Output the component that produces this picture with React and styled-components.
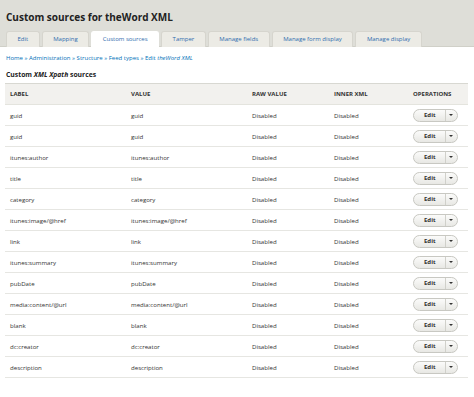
import styled, { createGlobalStyle } from 'styled-components';

const Global = createGlobalStyle`
	body {
		margin: 0;
		background: #fff;
		font-family: 'Open Sans', 'DejaVu Sans', sans-serif;
		color: #333;
	}
`;

const Header = styled.div`
	background: #deded8;
	padding: 10px 0 0 6px;
	border-bottom: 1px solid #d0d0c8;
`;

const Title = styled.h1`
	margin: 0 0 6px;
	font-size: 10px;
	line-height: 15px;
	font-weight: 700;
	color: #222;
`;

const Tabs = styled.div`
	display: flex;
	gap: 2px;
`;

const Tab = styled.a`
	display: block;
	padding: 0 ${(p) => p.$pad}px;
	height: 15px;
	line-height: 15px;
	font-size: 6px;
	white-space: nowrap;
	color: #2f6cae;
	background: ${(p) => (p.$active ? '#fff' : '#ecebe5')};
	border: 1px solid ${(p) => (p.$active ? '#fff' : '#d6d5ce')};
	border-bottom: none;
	border-radius: 3px 3px 0 0;
	margin-bottom: -1px;
`;

const Main = styled.div`
	padding: 0 6px 0 5px;
`;

const Crumbs = styled.div`
	margin: 7px 0 0 1px;
	font-size: 6px;
	line-height: 9px;
	color: #0071b8;
	em {
		font-style: italic;
	}
`;

const Caption = styled.h2`
	margin: 7px 0 3px 1px;
	font-size: 6.8px;
	line-height: 10px;
	font-weight: 700;
	color: #222;
`;

const Table = styled.table`
	width: 100%;
	table-layout: fixed;
	border-collapse: collapse;
	font-size: 6.1px;
`;

const Th = styled.th`
	text-align: left;
	font-weight: 700;
	font-size: 6px;
	text-transform: uppercase;
	background: #f2f1ee;
	color: #333;
	height: 20px;
	padding: 0 0 0 5px;
	border-top: 1px solid #d8d8d2;
	border-bottom: 1px solid #e4e4de;
	width: ${(p) => (p.$w ? `${p.$w}px` : 'auto')};
`;

const Td = styled.td`
	height: 20px;
	padding: 0 0 0 5px;
	border-bottom: 1px solid #e6e6e2;
	color: #333;
	white-space: nowrap;
`;

const DropButton = styled.div`
	display: inline-flex;
	align-items: center;
	height: 11px;
	border: 1px solid #c8c8c2;
	border-radius: 7px;
	background: linear-gradient(#fbfbfa, #e8e8e4);
	font-size: 6px;
	font-weight: 700;
	color: #333;
	overflow: hidden;
`;

const DropMain = styled.span`
	padding: 0 9px 0 10px;
	border-right: 1px solid #d0d0ca;
	line-height: 11px;
`;

const DropToggle = styled.span`
	width: 11px;
	display: flex;
	justify-content: center;
	align-items: center;
	&::after {
		content: '';
		border-left: 2px solid transparent;
		border-right: 2px solid transparent;
		border-top: 2.5px solid #333;
	}
`;

const tabs = [
	['Edit', 10.5],
	['Mapping', 10.5],
	['Custom sources', 10.5, true],
	['Tamper', 10.5],
	['Manage fields', 10.5],
	['Manage form display', 10.5],
	['Manage display', 10.5],
];

const rows = [
	'guid',
	'guid',
	'itunes:author',
	'title',
	'category',
	'itunes:image/@href',
	'link',
	'itunes:summary',
	'pubDate',
	'media:content/@url',
	'blank',
	'dc:creator',
	'description',
];

export default function App() {
	return (
		<>
			<Global />
			<Header>
				<Title>Custom sources for theWord XML</Title>
				<Tabs>
					{tabs.map(([t, pad, active]) => (
						<Tab key={t} $pad={pad} $active={active}>
							{t}
						</Tab>
					))}
				</Tabs>
			</Header>
			<Main>
				<Crumbs>
					Home » Administration » Structure » Feed types » Edit <em>theWord XML</em>
				</Crumbs>
				<Caption>
					Custom <em>XML Xpath</em> sources
				</Caption>
				<Table>
					<thead>
						<tr>
							<Th $w={116}>Label</Th>
							<Th $w={116}>Value</Th>
							<Th $w={77}>Raw value</Th>
							<Th $w={74}>Inner XML</Th>
							<Th>Operations</Th>
						</tr>
					</thead>
					<tbody>
						{rows.map((r, i) => (
							<tr key={i}>
								<Td>{r}</Td>
								<Td>{r}</Td>
								<Td>Disabled</Td>
								<Td>Disabled</Td>
								<Td>
									<DropButton>
										<DropMain>Edit</DropMain>
										<DropToggle />
									</DropButton>
								</Td>
							</tr>
						))}
					</tbody>
				</Table>
			</Main>
		</>
	);
}
